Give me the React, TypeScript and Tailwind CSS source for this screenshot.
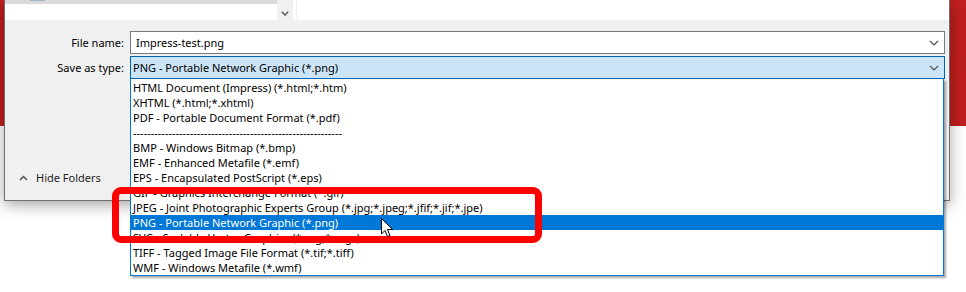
import React from "react";

const items = [
  "HTML Document (Impress) (*.html;*.htm)",
  "XHTML (*.html;*.xhtml)",
  "PDF - Portable Document Format (*.pdf)",
  "-----------------------------------------------------------",
  "BMP - Windows Bitmap (*.bmp)",
  "EMF - Enhanced Metafile (*.emf)",
  "EPS - Encapsulated PostScript (*.eps)",
  "GIF - Graphics Interchange Format (*.gif)",
  "JPEG - Joint Photographic Experts Group (*.jpg;*.jpeg;*.jfif;*.jif;*.jpe)",
  "PNG - Portable Network Graphic (*.png)",
  "SVG - Scalable Vector Graphics (*.svg;*.svgz)",
  "TIFF - Tagged Image File Format (*.tif;*.tiff)",
  "WMF - Windows Metafile (*.wmf)",
];

function ChevronDown({ className = "" }: { className?: string }) {
  return (
    <svg width="10" height="6" viewBox="0 0 10 6" className={className}>
      <polyline points="1,1 5,5 9,1" fill="none" stroke="#505050" strokeWidth="1.2" />
    </svg>
  );
}

export default function App() {
  return (
    <div
      className="relative w-[966px] h-[292px] overflow-hidden bg-white text-[11px] leading-[15px] text-black"
      style={{ fontFamily: '"Noto Sans", "Open Sans", sans-serif' }}
    >
      {/* red desktop background */}
      <div className="h-[126px] bg-[#bf1f1e]" />

      {/* dialog window */}
      <div className="absolute left-[4px] top-0 w-[946px] h-[201px] flex flex-col border-x border-b border-[#6e6e6e] bg-[#f0f0f0] shadow-[0_4px_14px_rgba(0,0,0,0.35)]">
        {/* top pane */}
        <div className="h-[20px] flex bg-white">
          <div className="w-[272px] relative">
            <div className="h-[4px] bg-[#d9d9d9]" />
            <div className="absolute left-[25px] top-0 w-[15px] h-[1px] bg-[#9fb4cc]" />
          </div>
          <div className="w-[16px] bg-[#f0f0f0] flex items-end justify-center pb-[4px]">
            <svg width="8" height="5" viewBox="0 0 8 5">
              <polyline points="0.8,0.8 4,4 7.2,0.8" fill="none" stroke="#606060" strokeWidth="1.6" />
            </svg>
          </div>
          <div className="w-[3px] bg-white" />
          <div className="w-[1px] bg-[#f0f0f0]" />
          <div className="flex-1 bg-white" />
        </div>

        {/* body */}
        <div className="flex-1 flex flex-col pt-[11px] pr-[4px]">
          <div className="flex items-center h-[23px]">
            <div className="w-[120px] text-right pr-[1px]">File name:</div>
            <div className="ml-[5px] flex-1 h-[23px] border border-[#7a7a7a] bg-white flex items-center pl-[5px] pr-[5px]">
              <span className="flex-1">Impress-test.png</span>
              <ChevronDown />
            </div>
          </div>
          <div className="flex items-center h-[23px] mt-[2px]">
            <div className="w-[120px] text-right pr-[1px]">Save as type:</div>
            <div className="ml-[5px] flex-1 h-[23px] border border-[#0063b1] bg-[#cce4f7] flex items-center pl-[2px] pr-[5px]">
              <span className="flex-1">PNG - Portable Network Graphic (*.png)</span>
              <ChevronDown />
            </div>
          </div>
          <div className="mt-auto mb-[15px] flex items-center pl-[14px] gap-[8px] text-[#1e1e1e]">
            <svg width="9" height="6" viewBox="0 0 9 6">
              <polyline points="1,5 4.5,1.5 8,5" fill="none" stroke="#505050" strokeWidth="1.5" />
            </svg>
            <span>Hide Folders</span>
          </div>
        </div>
      </div>

      {/* dropdown list */}
      <div className="absolute left-[130px] top-[79px] w-[814px] border-x border-b border-[#0078d7] bg-white pt-[1px] shadow-[2px_2px_2px_rgba(0,0,0,0.35)]">
        {items.map((t, i) => (
          <div
            key={i}
            className={
              "h-[15px] leading-[15px] pl-[2px] whitespace-nowrap " +
              (i === 9 ? "bg-[#0078d7] text-white" : "")
            }
          >
            {t}
          </div>
        ))}
      </div>

      {/* red annotation outline */}
      <div className="absolute left-[112px] top-[187px] w-[430px] h-[56px] border-[7px] border-[#ff0000] rounded-[9px]" />

      {/* mouse cursor */}
      <svg className="absolute left-[380px] top-[217px]" width="14" height="22" viewBox="0 0 14 22">
        <path
          d="M1.5 1.5 L1.5 17 L5 13.5 L7.5 19.5 L10 18.5 L7.5 12.5 L12.5 12.5 Z"
          fill="#fff"
          stroke="#000"
          strokeWidth="1"
          strokeLinejoin="miter"
        />
      </svg>
    </div>
  );
}
